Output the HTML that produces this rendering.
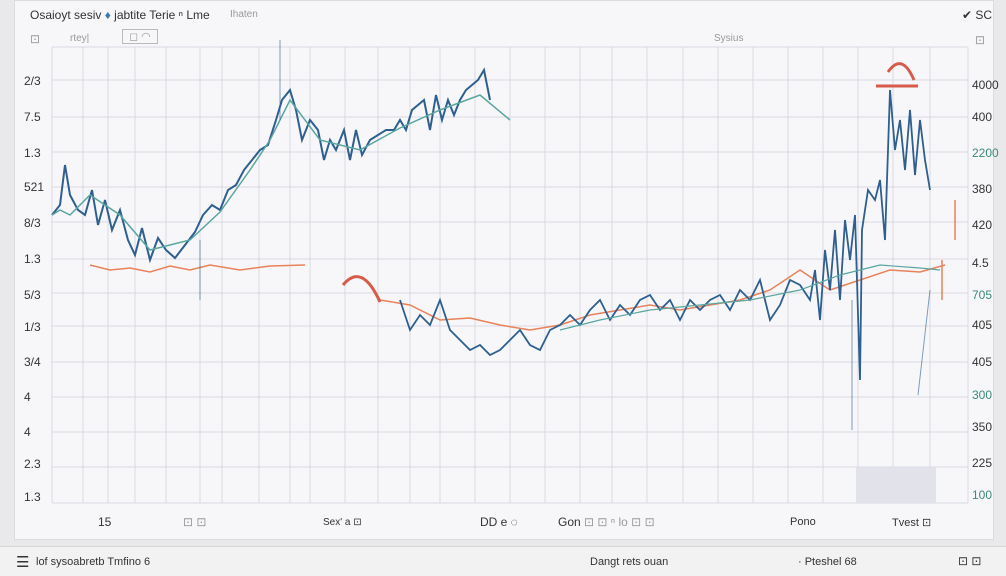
<!DOCTYPE html>
<html><head><meta charset="utf-8"><style>
body{margin:0;width:1006px;height:575px;background:#e9e9eb;font-family:"Liberation Sans",sans-serif;overflow:hidden;position:relative}
.card{position:absolute;left:14px;top:0;width:978px;height:538px;background:#f7f7f9;border:1px solid #dcdcdf}
.t{position:absolute;font-size:12px;color:#333;white-space:nowrap}
.g{color:#999}
.bar{position:absolute;left:0;top:546px;width:1006px;height:29px;background:#f2f2f3;border-top:1px solid #d5d5d8}
</style></head><body>
<div class="card"></div>
<div class="t" style="left:30px;top:8px">Osaioyt sesiv <span style="color:#3a7ab0">♦</span> jabtite Terie ⁿ Lme</div>
<div class="t g" style="left:230px;top:9px;font-size:10px">Ihaten</div>
<div class="t g" style="left:30px;top:32px">⊡</div>
<div class="t g" style="left:70px;top:33px;font-size:10px">rtey|</div>
<div class="t g" style="left:122px;top:29px;border:1px solid #bbb;padding:0 6px;font-size:11px">◻ ◠</div>
<div class="t g" style="left:714px;top:33px;font-size:10px">Sysius</div>
<div class="t" style="left:962px;top:8px">✔ SC</div>
<div class="t g" style="left:975px;top:33px">⊡</div>
<svg style="position:absolute;left:0;top:0" width="1006" height="575">
<g stroke="#d8dae2" stroke-width="1">
<line x1="52" y1="47" x2="968" y2="47"/><line x1="52" y1="80" x2="968" y2="80"/><line x1="52" y1="117" x2="968" y2="117"/><line x1="52" y1="152" x2="968" y2="152"/><line x1="52" y1="187" x2="968" y2="187"/><line x1="52" y1="222" x2="968" y2="222"/><line x1="52" y1="259" x2="968" y2="259"/><line x1="52" y1="293" x2="968" y2="293"/><line x1="52" y1="326" x2="968" y2="326"/><line x1="52" y1="362" x2="968" y2="362"/><line x1="52" y1="397" x2="968" y2="397"/><line x1="52" y1="432" x2="968" y2="432"/><line x1="52" y1="467" x2="968" y2="467"/><line x1="52" y1="503" x2="968" y2="503"/>
<line x1="52" y1="47" x2="52" y2="503"/><line x1="83" y1="47" x2="83" y2="503"/><line x1="108" y1="47" x2="108" y2="503"/><line x1="135" y1="47" x2="135" y2="503"/><line x1="166" y1="47" x2="166" y2="503"/><line x1="200" y1="47" x2="200" y2="503"/><line x1="222" y1="47" x2="222" y2="503"/><line x1="259" y1="47" x2="259" y2="503"/><line x1="290" y1="47" x2="290" y2="503"/><line x1="310" y1="47" x2="310" y2="503"/><line x1="345" y1="47" x2="345" y2="503"/><line x1="378" y1="47" x2="378" y2="503"/><line x1="410" y1="47" x2="410" y2="503"/><line x1="440" y1="47" x2="440" y2="503"/><line x1="475" y1="47" x2="475" y2="503"/><line x1="510" y1="47" x2="510" y2="503"/><line x1="545" y1="47" x2="545" y2="503"/><line x1="580" y1="47" x2="580" y2="503"/><line x1="612" y1="47" x2="612" y2="503"/><line x1="647" y1="47" x2="647" y2="503"/><line x1="683" y1="47" x2="683" y2="503"/><line x1="718" y1="47" x2="718" y2="503"/><line x1="753" y1="47" x2="753" y2="503"/><line x1="788" y1="47" x2="788" y2="503"/><line x1="823" y1="47" x2="823" y2="503"/><line x1="858" y1="47" x2="858" y2="503"/><line x1="893" y1="47" x2="893" y2="503"/><line x1="930" y1="47" x2="930" y2="503"/><line x1="968" y1="47" x2="968" y2="503"/>
</g>
<rect x="856" y="467" width="80" height="36" fill="#e2e3ea"/>
<polyline fill="none" stroke="#e8825a" stroke-width="1.5" points="90,265 110,270 130,268 150,272 170,266 190,270 210,265 240,270 270,266 305,265"/>
<polyline fill="none" stroke="#e8825a" stroke-width="1.5" points="380,300 410,305 440,320 470,318 500,325 530,330 560,325 590,315 620,310 650,305 680,310 710,305 740,300 770,290 800,270 830,290 860,280 890,270 920,272 945,265"/>
<path d="M343 285 Q362 262 380 302" fill="none" stroke="#d85a4a" stroke-width="3"/>
<path d="M888 72 Q902 52 914 80 M876 86 L918 86" fill="none" stroke="#d85a4a" stroke-width="3"/>
<polyline fill="none" stroke="#2e5f8f" stroke-width="2" points="52,215 60,205 65,165 70,195 78,210 85,215 92,190 98,225 105,200 112,230 120,210 128,240 135,255 142,228 150,260 158,238 166,250 175,258 185,245 195,232 203,215 212,205 220,210 228,190 236,185 244,170 252,160 260,150 268,145 276,120 282,100 290,90 296,110 302,140 310,120 318,130 324,160 330,140 336,150 344,130 350,160 356,130 362,155 370,140 378,135 386,130 394,130 400,120 406,130 412,110 418,105 424,100 430,130 436,95 442,120 448,100 454,115 460,100 466,90 472,85 478,80 484,70 490,100"/>
<polyline fill="none" stroke="#5aa5a0" stroke-width="1.5" points="52,215 60,210 70,215 90,195 120,215 150,250 190,240 220,212 250,170 270,140 290,100 320,140 360,150 400,128 440,110 480,95 510,120"/>
<polyline fill="none" stroke="#2e5f8f" stroke-width="1.8" points="400,300 410,330 420,315 430,325 440,300 450,330 460,340 470,350 480,345 490,355 500,350 510,340 520,330 530,345 540,350 550,330 560,325 570,315 580,325 590,310 600,300 610,320 620,305 630,315 640,300 650,295 660,310 670,300 680,320 690,300 700,310 710,300 720,295 730,310 740,290 750,300 760,280 770,320 780,305 790,280 800,285 810,300 815,270 820,320 825,250 830,290 835,230 840,300 845,220 850,260 855,215 860,380 862,230 868,190 875,200 880,180 885,240 890,90 895,150 900,120 905,170 910,110 915,175 920,120 925,160 930,190"/>
<polyline fill="none" stroke="#5aa5a0" stroke-width="1.2" points="560,330 600,320 650,310 700,305 750,300 800,290 840,275 880,265 920,268 940,270"/>
<g stroke="#2e5f8f" stroke-width="1" opacity=".6"><line x1="200" y1="240" x2="200" y2="300"/><line x1="280" y1="40" x2="280" y2="120"/><line x1="852" y1="300" x2="852" y2="430"/><line x1="930" y1="290" x2="918" y2="395"/></g>
<line x1="955" y1="200" x2="955" y2="240" stroke="#e8825a" stroke-width="1.5"/>
<line x1="942" y1="260" x2="942" y2="300" stroke="#e8825a" stroke-width="1.5"/>
</svg>
<div class="t" style="left:24px;top:74px">2/3</div>
<div class="t" style="left:24px;top:110px">7.5</div>
<div class="t" style="left:24px;top:146px">1.3</div>
<div class="t" style="left:24px;top:180px">521</div>
<div class="t" style="left:24px;top:216px">8/3</div>
<div class="t" style="left:24px;top:252px">1.3</div>
<div class="t" style="left:24px;top:288px">5/3</div>
<div class="t" style="left:24px;top:320px">1/3</div>
<div class="t" style="left:24px;top:355px">3/4</div>
<div class="t" style="left:24px;top:390px">4</div>
<div class="t" style="left:24px;top:425px">4</div>
<div class="t" style="left:24px;top:457px">2.3</div>
<div class="t" style="left:24px;top:490px">1.3</div>
<div class="t" style="left:972px;top:78px">4000</div>
<div class="t" style="left:972px;top:110px">400</div>
<div class="t" style="left:972px;top:146px;color:#3a8a7a">2200</div>
<div class="t" style="left:972px;top:182px">380</div>
<div class="t" style="left:972px;top:218px">420</div>
<div class="t" style="left:972px;top:256px">4.5</div>
<div class="t" style="left:972px;top:288px;color:#3a8a7a">705</div>
<div class="t" style="left:972px;top:318px">405</div>
<div class="t" style="left:972px;top:355px">405</div>
<div class="t" style="left:972px;top:388px;color:#3a8a7a">300</div>
<div class="t" style="left:972px;top:420px">350</div>
<div class="t" style="left:972px;top:456px">225</div>
<div class="t" style="left:972px;top:488px;color:#3a8a7a">100</div>
<div class="t" style="left:98px;top:515px">15</div>
<div class="t g" style="left:183px;top:515px">⊡ ⊡</div>
<div class="t" style="left:323px;top:517px;font-size:10px">Sex' a ⊡</div>
<div class="t" style="left:480px;top:515px">DD e ◌</div>
<div class="t" style="left:558px;top:515px">Gon <span class="g">⊡ ⊡ ⁿ lo ⊡ ⊡</span></div>
<div class="t" style="left:790px;top:516px;font-size:11px">Pono</div>
<div class="t" style="left:892px;top:516px;font-size:11px">Tvest ⊡</div>
<div class="bar"></div>
<div class="t" style="left:16px;top:553px;font-size:15px">☰</div>
<div class="t" style="left:36px;top:556px;font-size:11px">lof sysoabretb Tmfino 6</div>
<div class="t" style="left:590px;top:556px;font-size:11px">Dangt rets ouan</div>
<div class="t" style="left:798px;top:556px;font-size:11px">· Pteshel 68</div>
<div class="t" style="left:958px;top:554px">⊡ ⊡</div>
</body></html>
